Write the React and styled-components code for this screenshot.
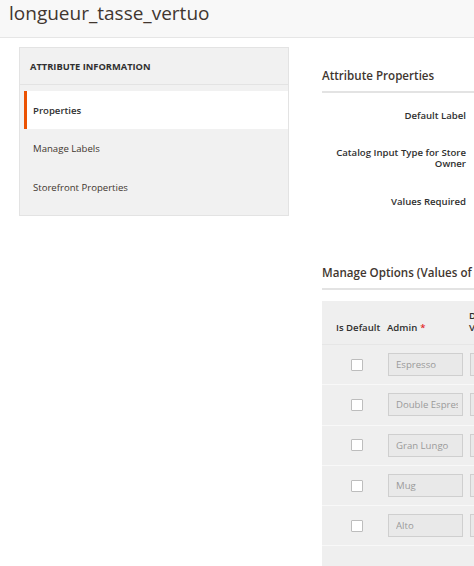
import React from "react";
import styled, { createGlobalStyle } from "styled-components";

const Global = createGlobalStyle`
  html, body { margin: 0; padding: 0; background: #fff; overflow: hidden; }
  body { font-family: "Open Sans", "Liberation Sans", sans-serif; color: #41362f; }
`;

const Page = styled.div`
  width: 474px;
  height: 566px;
  overflow: hidden;
`;

const TitleBar = styled.header`
  height: 37px;
  background: #f8f8f8;
  border-bottom: 1px solid #e6e6e6;
  display: flex;
  align-items: flex-start;
  padding-left: 9px;
`;

const Title = styled.h1`
  margin: 0;
  font-size: 19px;
  font-weight: 400;
  line-height: 26px;
  color: #41362f;
  white-space: nowrap;
`;

const Main = styled.div`
  display: flex;
  align-items: flex-start;
  width: 800px;
`;

const Nav = styled.nav`
  margin: 9px 0 0 19px;
  width: 270px;
  flex: none;
  background: #f1f1f1;
  border: 1px solid #e3e3e3;
  box-sizing: border-box;
  padding-bottom: 8px;
`;

const NavTitle = styled.div`
  height: 36px;
  display: flex;
  align-items: center;
  padding-left: 10px;
  font-size: 9.3px;
  font-weight: 700;
  text-transform: uppercase;
  color: #303030;
  border-bottom: 1px solid #e3e3e3;
  margin-bottom: 6px;
`;

const NavItem = styled.div`
  height: ${(p) => (p.$active ? 38 : 39)}px;
  display: flex;
  align-items: center;
  margin-left: ${(p) => (p.$active ? 4 : 0)}px;
  padding-left: ${(p) => (p.$active ? 6 : 13)}px;
  border-left: ${(p) => (p.$active ? "3px solid #eb5202" : "none")};
  background: ${(p) => (p.$active ? "#fff" : "transparent")};
  font-size: 9.6px;
  font-weight: ${(p) => (p.$active ? 600 : 400)};
  color: ${(p) => (p.$active ? "#303030" : "#41362f")};
`;

const Content = styled.div`
  margin-left: 33px;
  width: 470px;
  flex: none;
`;

const SectionTitle = styled.h2`
  margin: 0;
  font-size: 11.6px;
  font-weight: 600;
  color: #41362f;
  white-space: nowrap;
  line-height: 16px;
  padding-bottom: 7px;
  border-bottom: 2px solid #e3e3e3;
  margin-top: ${(p) => p.$top}px;
`;

const FieldRow = styled.div`
  display: grid;
  grid-template-columns: 144px 1fr;
  margin-top: ${(p) => p.$top}px;
`;

const Label = styled.div`
  text-align: right;
  font-size: 9.6px;
  font-weight: 600;
  line-height: 11.5px;
  color: #303030;
`;

const Table = styled.div`
  margin-top: 11px;
  background: #efefef;
  width: 470px;
`;

const HeadRow = styled.div`
  display: grid;
  grid-template-columns: 65px 82px 1fr;
  height: 44px;
  align-items: end;
  padding-bottom: 10px;
  box-sizing: border-box;
  border-bottom: 1px solid #e6e6e6;
`;

const Th = styled.div`
  font-size: 9.6px;
  font-weight: 600;
  color: #303030;
  line-height: 12px;
  padding-left: ${(p) => p.$pl || 0}px;
  white-space: nowrap;
`;

const Req = styled.span`
  color: #e22626;
  margin-left: 3px;
`;

const Row = styled.div`
  display: grid;
  grid-template-columns: 65px 82px 1fr;
  height: 40.3px;
  box-sizing: border-box;
  align-items: center;
  border-bottom: 1px solid #f8f8f8;
`;

const CheckCell = styled.div`
  display: flex;
  justify-content: center;
  padding-left: 5px;
`;

const Checkbox = styled.span`
  width: 10px;
  height: 10px;
  background: #fff;
  border: 1px solid #bdbdbd;
  border-radius: 1px;
`;

const Input = styled.div`
  width: 75px;
  height: 23px;
  box-sizing: border-box;
  background: #e9e9e9;
  border: 1px solid #cfcfcf;
  font-size: 9.6px;
  color: #9a9a9a;
  display: flex;
  align-items: center;
  padding: 0 4px 0 7px;
  margin-left: 1px;
`;

const Value = styled.span`
  display: block;
  overflow: hidden;
  white-space: nowrap;
  width: 100%;
`;

const Footer = styled.div`
  height: 30px;
`;

const options = ["Espresso", "Double Espresso", "Gran Lungo", "Mug", "Alto"];

export default function App() {
  return (
    <Page>
      <Global />
      <TitleBar>
        <Title>longueur_tasse_vertuo</Title>
      </TitleBar>
      <Main>
        <Nav>
          <NavTitle>Attribute Information</NavTitle>
          <NavItem $active>Properties</NavItem>
          <NavItem>Manage Labels</NavItem>
          <NavItem>Storefront Properties</NavItem>
        </Nav>
        <Content>
          <SectionTitle $top={30}>Attribute Properties</SectionTitle>
          <FieldRow $top={17}>
            <Label>Default Label</Label>
          </FieldRow>
          <FieldRow $top={25}>
            <Label>Catalog Input Type for Store Owner</Label>
          </FieldRow>
          <FieldRow $top={26}>
            <Label>Values Required</Label>
          </FieldRow>
          <SectionTitle $top={58}>Manage Options (Values of Your Attribute)</SectionTitle>
          <Table>
            <HeadRow>
              <Th $pl={14}>Is Default</Th>
              <Th>
                Admin<Req>*</Req>
              </Th>
              <Th>
                Default Store
                <br />
                View
              </Th>
            </HeadRow>
            {options.map((o) => (
              <Row key={o}>
                <CheckCell>
                  <Checkbox />
                </CheckCell>
                <Input>
                  <Value>{o}</Value>
                </Input>
                <Input />
              </Row>
            ))}
            <Footer />
          </Table>
        </Content>
      </Main>
    </Page>
  );
}
